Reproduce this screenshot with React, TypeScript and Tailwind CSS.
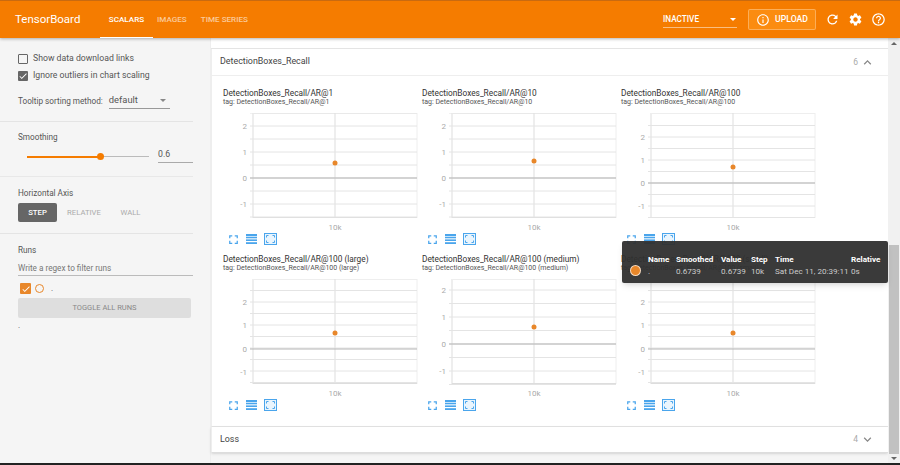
import { MdRefresh, MdSettings, MdHelpOutline, MdInfoOutline, MdFullscreen, MdExpandLess, MdExpandMore, MdCheck } from "react-icons/md";

const charts = [
  { title: "DetectionBoxes_Recall/AR@1", ticks: [125, 151, 177, 203], top: 112, dot: 162 },
  { title: "DetectionBoxes_Recall/AR@10", ticks: [125, 151, 177, 203], top: 112, dot: 160 },
  { title: "DetectionBoxes_Recall/AR@100", ticks: [136, 159, 182, 205], top: 112, dot: 166 },
  { title: "DetectionBoxes_Recall/AR@100 (large)", ticks: [301, 324, 348, 371], top: 278, dot: 332 },
  { title: "DetectionBoxes_Recall/AR@100 (medium)", ticks: [289, 316, 343, 370], top: 278, dot: 326 },
  { title: "DetectionBoxes_Recall/AR@100 (small)", ticks: [301, 324, 348, 371], top: 278, dot: 332 },
];

function ChartPlot({ ticks, top, dot }: { ticks: number[]; top: number; dot: number }) {
  const step = ticks[1] - ticks[0];
  const y = (v: number) => v - top;
  const labels = ["2", "1", "0", "-1"];
  const lines: number[] = [];
  for (let v = ticks[0] - step / 2; v < top + 106; v += step / 2) {
    if (v >= top) lines.push(v);
  }
  return (
    <svg width="199" height="118" viewBox="0 0 199 118" className="block">
      <line x1="30" x2="30" y1="0" y2="105" stroke="#ddd" />
      <line x1="194" x2="194" y1="0" y2="105" stroke="#eee" />
      <line x1="30" x2="194" y1="0.5" y2="0.5" stroke="#eee" />
      <line x1="30" x2="194" y1="104.5" y2="104.5" stroke="#ddd" />
      <line x1="112" x2="112" y1="0" y2="105" stroke="#ddd" />
      {lines.map((v) => (
        <line key={v} x1="27" x2="194" y1={y(v)} y2={y(v)} stroke="#e4e4e4" />
      ))}
      <line x1="27" x2="194" y1={y(ticks[2])} y2={y(ticks[2])} stroke="#b5b5b5" />
      {ticks.map((t, i) => (
        <text key={t} x="24" y={y(t) + 3} textAnchor="end" fontSize="8" fill="#aaa" fontFamily="Roboto, sans-serif">
          {labels[i]}
        </text>
      ))}
      <text x="112" y="117" textAnchor="middle" fontSize="8" fill="#aaa" fontFamily="Roboto, sans-serif">
        10k
      </text>
      <circle cx="112" cy={y(dot)} r="2.5" fill="#e8872a" />
    </svg>
  );
}

function ChartActions() {
  return (
    <div className="flex items-center h-[14px] mt-[1px] ml-[3px]">
      <MdFullscreen size={15} className="text-[#4aa5ec]" />
      <svg width="11" height="10" viewBox="0 0 11 10" className="ml-[5px]" fill="#4aa5ec">
        <rect x="0" y="0" width="11" height="2" />
        <rect x="0" y="2.7" width="11" height="1.6" />
        <rect x="0" y="5.4" width="11" height="1.6" />
        <rect x="0" y="8.2" width="11" height="1.8" />
      </svg>
      <svg width="13" height="12" viewBox="0 0 13 12" className="ml-[7px]" fill="#eaf5fd" stroke="#4aa5ec">
        <rect x="0.5" y="0.5" width="12" height="11" />
        <path d="M2.5 4.5V2.5H4.5M8.5 2.5H10.5V4.5M10.5 7.5V9.5H8.5M4.5 9.5H2.5V7.5" fill="none" strokeWidth="1" />
      </svg>
    </div>
  );
}

function ChartCard({ chart }: { chart: (typeof charts)[number] }) {
  return (
    <div className="w-[199px] h-[166px]">
      <div className="text-[8.3px] leading-[10px] text-[#333] whitespace-nowrap">{chart.title}</div>
      <div className="text-[7px] leading-[8px] text-[#555] mb-[7px] whitespace-nowrap">tag: {chart.title}</div>
      <ChartPlot ticks={chart.ticks} top={chart.top} dot={chart.dot} />
      <ChartActions />
    </div>
  );
}

function Sidebar() {
  return (
    <aside className="w-[211px] shrink-0 bg-[#f5f5f5] text-[#555] border-r border-[#eee] h-full">
      <div className="w-[193px] border-b border-[#e4e4e4] h-[84px] pl-[18px] pt-[12px]">
        <label className="flex items-center h-[17px] text-[8.7px]">
          <span className="w-[10px] h-[10px] border border-[#666] rounded-[1px] mr-[5px]" />
          Show data download links
        </label>
        <label className="flex items-center h-[17px] text-[8.7px]">
          <span className="w-[10px] h-[10px] bg-[#666] rounded-[1px] mr-[5px] flex items-center justify-center text-white">
            <MdCheck size={10} />
          </span>
          Ignore outliers in chart scaling
        </label>
        <div className="flex items-center mt-[9px] text-[8.2px]">
          Tooltip sorting method:
          <div className="ml-[6px] w-[61px] h-[16px] border-b border-[#999] flex items-center justify-between pr-[4px] text-[9.4px] text-[#555]">
            default
            <span className="w-0 h-0 border-x-[3px] border-x-transparent border-t-[3px] border-t-[#888]" />
          </div>
        </div>
      </div>

      <div className="w-[193px] border-b border-[#e8e8e8] h-[55px] pl-[18px] pt-[10px]">
        <div className="text-[8.2px] leading-[11px]">Smoothing</div>
        <div className="flex items-center mt-[6px]">
          <div className="relative w-[122px] ml-[9px] h-[1px] bg-[#bbb]">
            <div className="h-[2px] w-[73px] bg-[#f57c00]" />
            <div className="absolute left-[70px] -top-[3px] w-[7px] h-[7px] rounded-full bg-[#f57c00]" />
          </div>
          <div className="ml-[9px] w-[35px] h-[14px] border-b border-[#aaa] text-[8.7px] leading-[10px] text-[#555]">0.6</div>
        </div>
      </div>

      <div className="w-[193px] border-b border-[#e4e4e4] h-[57px] pl-[18px] pt-[11px]">
        <div className="text-[8.2px] leading-[11px]">Horizontal Axis</div>
        <div className="flex items-center mt-[4px] text-[7.7px] text-[#aaa]">
          <span className="w-[39px] h-[19px] bg-[#666] text-white rounded-[2px] flex items-center justify-center font-medium">STEP</span>
          <span className="ml-[10px] w-[34px] text-center">RELATIVE</span>
          <span className="ml-[19px] w-[21px] text-center">WALL</span>
        </div>
      </div>

      <div className="w-[193px] pl-[18px] pt-[11px]">
        <div className="text-[8.2px] leading-[11px]">Runs</div>
        <div className="mt-[7px] h-[13px] border-b border-[#bbb] text-[8.2px] leading-[11px] text-[#777]">Write a regex to filter runs</div>
        <div className="flex items-center mt-[7px] h-[11px] ml-[2px]">
          <span className="w-[11px] h-[11px] bg-[#e8872a] rounded-[1px] text-white flex items-center justify-center">
            <MdCheck size={10} />
          </span>
          <span className="ml-[4px] w-[9px] h-[9px] rounded-full border border-[#e8872a]" />
          <span className="ml-[7px] text-[8px] leading-[8px]">.</span>
        </div>
        <div className="mt-[4px] w-[173px] h-[20px] bg-[#dedede] rounded-[2px] text-[7.5px] text-[#888] flex items-center justify-center">TOGGLE ALL RUNS</div>
        <div className="mt-[4px] text-[8px] leading-[8px]">.</div>
      </div>
    </aside>
  );
}

function Tooltip() {
  const heads = ["Name", "Smoothed", "Value", "Step", "Time", "Relative"];
  const vals = [".", "0.6739", "0.6739", "10k", "Sat Dec 11, 20:39:11", "0s"];
  const widths = ["w-[28px]", "w-[45px]", "w-[30px]", "w-[24px]", "w-[76px]", "w-[33px]"];
  return (
    <div className="absolute left-[622px] top-[241px] w-[266px] h-[42px] bg-[#2f2f2f]/95 rounded-[2px] shadow-md text-[8.1px] pl-[26px] pt-[13px]">
      <span className="absolute left-[8px] top-[24px] w-[11px] h-[11px] rounded-full bg-[#e8872a] border border-white/70" />
      <div className="flex font-bold text-white leading-[11px]">
        {heads.map((h, i) => (
          <span key={h} className={widths[i]}>{h}</span>
        ))}
      </div>
      <div className="flex text-[#ccc] leading-[11px] mt-[1px]">
        {vals.map((v, i) => (
          <span key={i} className={`${widths[i]} whitespace-nowrap`}>{v}</span>
        ))}
      </div>
    </div>
  );
}

export default function App() {
  return (
    <div className="relative w-[900px] h-[465px] overflow-hidden flex flex-col bg-[#f5f5f5] font-['Roboto',sans-serif]">
      <header className="h-[38px] shrink-0 bg-[#f57c00] border-t border-[#c96a10] shadow-[0_1px_3px_rgba(0,0,0,0.3)] flex items-center text-white relative z-10">
        <div className="ml-[15px] w-[85px] text-[11.5px]">TensorBoard</div>
        <nav className="flex h-full text-[8.1px] font-medium">
          <div className="w-[53px] flex items-center justify-center border-b border-white">SCALARS</div>
          <div className="ml-[4px] flex items-center text-white/60">IMAGES</div>
          <div className="ml-[14px] flex items-center text-white/60">TIME SERIES</div>
        </nav>
        <div className="ml-auto w-[74px] h-[15px] mt-[1px] border-b border-white/50 flex items-center justify-between text-[8.2px] font-medium pr-[1px]">
          INACTIVE
          <span className="w-0 h-0 border-x-[3px] border-x-transparent border-t-[3px] border-t-white" />
        </div>
        <div className="ml-[11px] w-[68px] h-[21px] border border-white/30 rounded-[2px] bg-[#fb8c10] flex items-center justify-center text-[8.7px] font-medium">
          <MdInfoOutline size={14} className="mr-[5px]" />
          UPLOAD
        </div>
        <MdRefresh size={15} className="ml-[9px]" />
        <MdSettings size={15} className="ml-[8px]" />
        <MdHelpOutline size={15} className="ml-[8px] mr-[14px]" />
      </header>

      <div className="flex flex-1 min-h-0">
        <Sidebar />
        <main className="w-[677px] shrink-0 flex flex-col">
          <div className="h-[11px] bg-white border-b border-[#e4e4e4]" />
          <section className="h-[378px] bg-white border-b border-[#e4e4e4] border-l border-l-[#eee]">
            <div className="h-[27px] border-b border-[#eee] flex items-center pl-[8px] pr-[13px] text-[8.9px] text-[#444]">
              DetectionBoxes_Recall
              <span className="ml-auto text-[8.5px] text-[#aaa] mr-[2px]">6</span>
              <MdExpandLess size={15} className="text-[#888]" />
            </div>
            <div className="grid grid-cols-[199px_199px_199px] pt-[12px] pl-[11px]">
              {charts.map((c) => (
                <ChartCard key={c.title} chart={c} />
              ))}
            </div>
          </section>
          <section className="h-[26px] bg-white border-b border-[#ddd] border-l border-l-[#eee] shadow-sm flex items-center pl-[8px] pr-[13px] text-[8.9px] text-[#444]">
            Loss
            <span className="ml-auto text-[8.5px] text-[#aaa] mr-[2px]">4</span>
            <MdExpandMore size={15} className="text-[#888]" />
          </section>
        </main>
        <div className="w-[12px] shrink-0 bg-[#f1f1f1] flex flex-col items-center">
          <span className="mt-[4px] w-0 h-0 border-x-[3px] border-x-transparent border-b-[3px] border-b-[#666]" />
          <div className="mt-[200px] w-[10px] h-[209px] bg-[#c1c1c1]" />
          <span className="mt-[3px] w-0 h-0 border-x-[3px] border-x-transparent border-t-[3px] border-t-[#666]" />
        </div>
      </div>
      <div className="h-[2px] shrink-0 bg-[#222]" />
      <Tooltip />
    </div>
  );
}
